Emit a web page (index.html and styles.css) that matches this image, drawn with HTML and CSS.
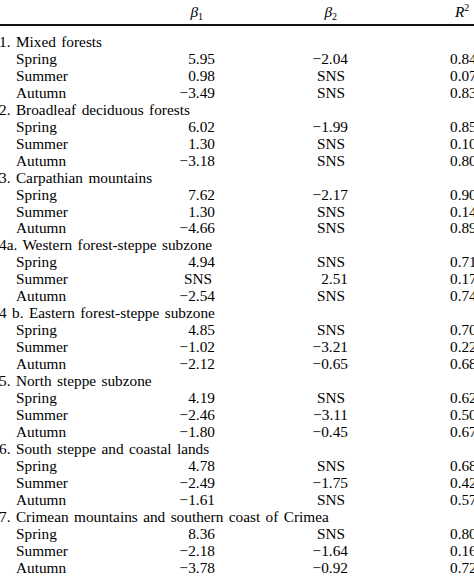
FILE: index.html
```html
<!DOCTYPE html>
<html>
<head>
<meta charset="utf-8">
<link rel="stylesheet" href="styles.css">
</head>
<body>
<table class="data">
  <colgroup>
    <col class="c-label"><col class="c-b1"><col class="c-b2"><col class="c-r2">
  </colgroup>
  <thead>
    <tr>
      <th></th>
      <th class="h-b1"><i>β</i><sub>1</sub></th>
      <th class="h-b2"><i>β</i><sub>2</sub></th>
      <th class="h-r2"><i>R</i><sup>2</sup></th>
    </tr>
  </thead>
  <tbody>
    <tr class="grp"><td colspan="4">1. Mixed forests</td></tr>
    <tr><td class="lab">Spring</td><td class="n1">5.95</td><td class="n2">−2.04</td><td class="r">0.84</td></tr>
    <tr><td class="lab">Summer</td><td class="n1">0.98</td><td class="n2 sns">SNS</td><td class="r">0.07</td></tr>
    <tr><td class="lab">Autumn</td><td class="n1">−3.49</td><td class="n2 sns">SNS</td><td class="r">0.83</td></tr>
    <tr class="grp"><td colspan="4">2. Broadleaf deciduous forests</td></tr>
    <tr><td class="lab">Spring</td><td class="n1">6.02</td><td class="n2">−1.99</td><td class="r">0.85</td></tr>
    <tr><td class="lab">Summer</td><td class="n1">1.30</td><td class="n2 sns">SNS</td><td class="r">0.10</td></tr>
    <tr><td class="lab">Autumn</td><td class="n1">−3.18</td><td class="n2 sns">SNS</td><td class="r">0.80</td></tr>
    <tr class="grp"><td colspan="4">3. Carpathian mountains</td></tr>
    <tr><td class="lab">Spring</td><td class="n1">7.62</td><td class="n2">−2.17</td><td class="r">0.90</td></tr>
    <tr><td class="lab">Summer</td><td class="n1">1.30</td><td class="n2 sns">SNS</td><td class="r">0.14</td></tr>
    <tr><td class="lab">Autumn</td><td class="n1">−4.66</td><td class="n2 sns">SNS</td><td class="r">0.89</td></tr>
    <tr class="grp"><td colspan="4">4a. Western forest-steppe subzone</td></tr>
    <tr><td class="lab">Spring</td><td class="n1">4.94</td><td class="n2 sns">SNS</td><td class="r">0.71</td></tr>
    <tr><td class="lab">Summer</td><td class="n1 sns">SNS</td><td class="n2">2.51</td><td class="r">0.17</td></tr>
    <tr><td class="lab">Autumn</td><td class="n1">−2.54</td><td class="n2 sns">SNS</td><td class="r">0.74</td></tr>
    <tr class="grp"><td colspan="4">4 b. Eastern forest-steppe subzone</td></tr>
    <tr><td class="lab">Spring</td><td class="n1">4.85</td><td class="n2 sns">SNS</td><td class="r">0.70</td></tr>
    <tr><td class="lab">Summer</td><td class="n1">−1.02</td><td class="n2">−3.21</td><td class="r">0.22</td></tr>
    <tr><td class="lab">Autumn</td><td class="n1">−2.12</td><td class="n2">−0.65</td><td class="r">0.68</td></tr>
    <tr class="grp"><td colspan="4">5. North steppe subzone</td></tr>
    <tr><td class="lab">Spring</td><td class="n1">4.19</td><td class="n2 sns">SNS</td><td class="r">0.62</td></tr>
    <tr><td class="lab">Summer</td><td class="n1">−2.46</td><td class="n2">−3.11</td><td class="r">0.50</td></tr>
    <tr><td class="lab">Autumn</td><td class="n1">−1.80</td><td class="n2">−0.45</td><td class="r">0.67</td></tr>
    <tr class="grp"><td colspan="4">6. South steppe and coastal lands</td></tr>
    <tr><td class="lab">Spring</td><td class="n1">4.78</td><td class="n2 sns">SNS</td><td class="r">0.68</td></tr>
    <tr><td class="lab">Summer</td><td class="n1">−2.49</td><td class="n2">−1.75</td><td class="r">0.42</td></tr>
    <tr><td class="lab">Autumn</td><td class="n1">−1.61</td><td class="n2 sns">SNS</td><td class="r">0.57</td></tr>
    <tr class="grp"><td colspan="4">7. Crimean mountains and southern coast of Crimea</td></tr>
    <tr><td class="lab">Spring</td><td class="n1">8.36</td><td class="n2 sns">SNS</td><td class="r">0.80</td></tr>
    <tr><td class="lab">Summer</td><td class="n1">−2.18</td><td class="n2">−1.64</td><td class="r">0.16</td></tr>
    <tr><td class="lab">Autumn</td><td class="n1">−3.78</td><td class="n2">−0.92</td><td class="r">0.72</td></tr>
  </tbody>
</table>
</body>
</html>
```

FILE: styles.css
```css
html, body {
  margin: 0;
  padding: 0;
  background: #ffffff;
  overflow: hidden;
}

body {
  font-family: "Liberation Serif", "Times New Roman", serif;
  font-size: 15.3px;
  color: #000000;
}

.data {
  border-collapse: collapse;
  table-layout: fixed;
  width: 520px;
  margin-left: -1px;
}

.c-label { width: 140px; }
.c-b1 { width: 76px; }
.c-b2 { width: 133px; }
.c-r2 { width: 171px; }

.data th {
  height: 24px;
  padding: 0;
  line-height: 24px;
  font-weight: normal;
  border-bottom: 2px solid #111111;
  white-space: nowrap;
}

.data th i {
  font-style: italic;
}

.data sub, .data sup {
  font-size: 10px;
  line-height: 0;
  font-style: normal;
}
.data sub { vertical-align: -3px; }
.data sup { vertical-align: 6px; }

.h-b1 { text-align: right; padding-right: 12px !important; }
.h-b2 { text-align: right; padding-right: 11px !important; }
.h-r2 { text-align: left; padding-left: 107px !important; }

.data td {
  padding: 0;
  line-height: 16.95px;
  height: 16.95px;
  white-space: nowrap;
}

.data tbody tr:first-child td {
  padding-top: 8px;
}

.grp td {
  word-spacing: 1.6px;
}

.lab {
  padding-left: 17px !important;
}

.n1, .n2 {
  text-align: right;
}

.sns {
  padding-right: 3px !important;
}

.r {
  padding-left: 102px !important;
}
```
